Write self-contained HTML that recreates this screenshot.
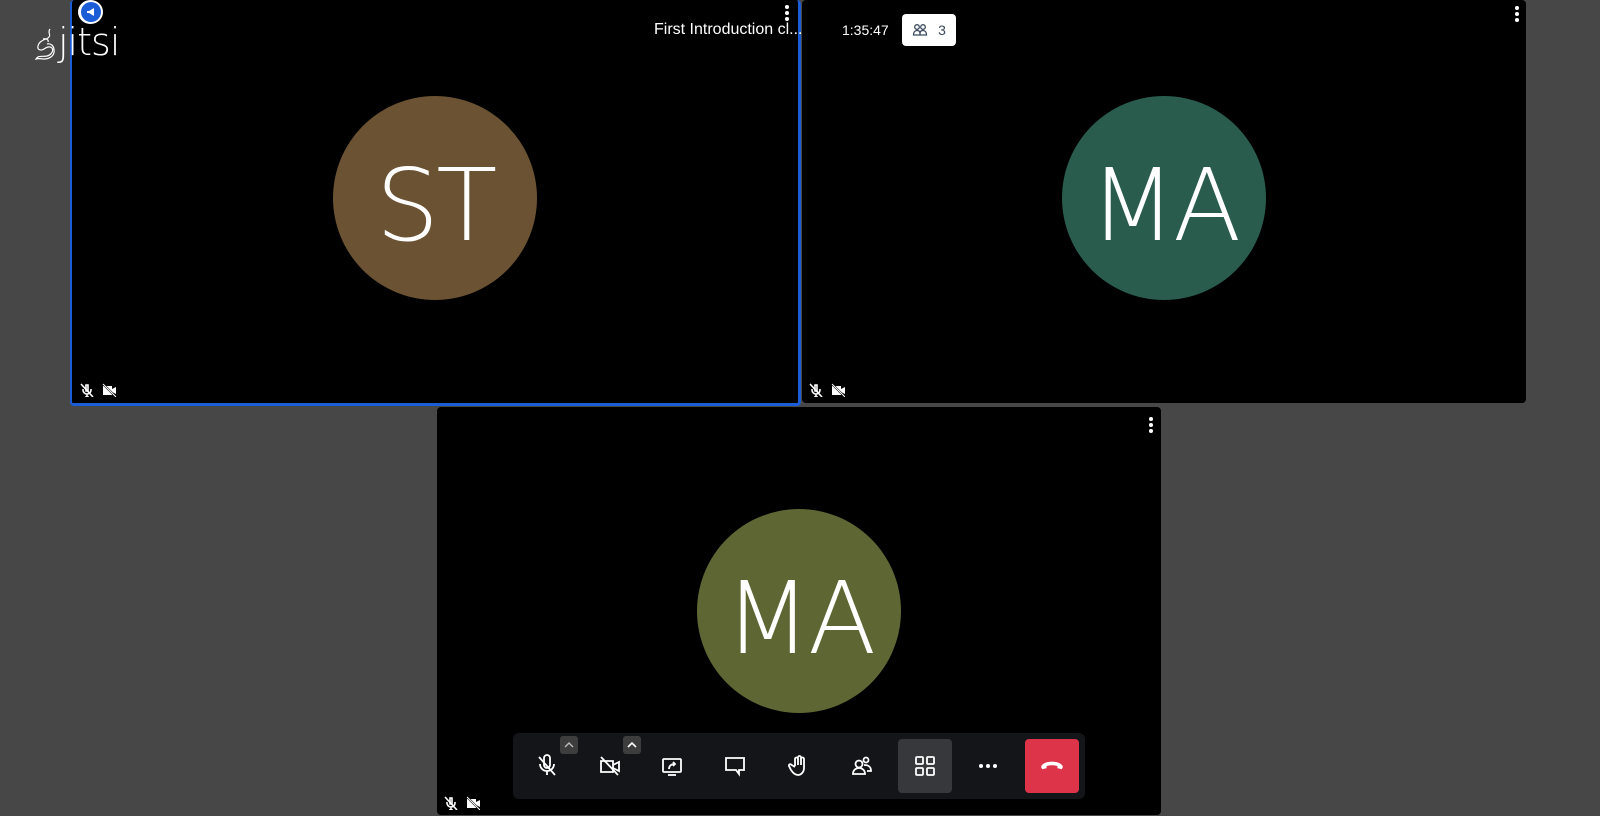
<!DOCTYPE html>
<html><head><meta charset="utf-8"><style>
*{margin:0;padding:0;box-sizing:border-box}
body{width:1600px;height:816px;background:#474747;position:relative;overflow:hidden;font-family:"Liberation Sans",sans-serif;color:#fff}
.tile{position:absolute;background:#000;border-radius:4px}
.av{position:absolute;border-radius:50%;display:flex;align-items:center;justify-content:center;font-size:100px;color:#fff;letter-spacing:-3px;font-family:"DejaVu Sans","Liberation Sans",sans-serif;font-weight:200;padding-top:14px}
.dots{position:absolute;width:4px}
.dots i{display:block;width:4px;height:4px;border-radius:50%;background:#fff;margin-bottom:2px}
.ind{position:absolute;display:flex;gap:8px}
.btn{position:absolute;top:739px;width:54px;height:54px;display:flex;align-items:center;justify-content:center;border-radius:4px}
.car{position:absolute;top:736px;width:18px;height:18px;background:#3d3d3d;border-radius:3px;display:flex;align-items:center;justify-content:center}
</style></head><body>
<div class="tile" style="left:70px;top:0;width:731px;height:406px;border:3px solid #1a5dd6;border-top:none;border-left-width:2px"></div>
<div class="tile" style="left:802px;top:0;width:724px;height:403px"></div>
<div class="tile" style="left:437px;top:407px;width:724px;height:408px"></div>

<div class="av" style="left:333px;top:96px;width:204px;height:204px;background:#6a5232">ST</div>
<div class="av" style="left:1062px;top:96px;width:204px;height:204px;background:#295c4d">MA</div>
<div class="av" style="left:697px;top:509px;width:204px;height:204px;background:#5e6734">MA</div>

<div class="dots" style="left:785px;top:5px"><i></i><i></i><i></i></div>
<div class="dots" style="left:1515px;top:6px"><i></i><i></i><i></i></div>
<div class="dots" style="left:1149px;top:417px"><i></i><i></i><i></i></div>

<svg width="0" height="0" style="position:absolute"><defs>
<g id="mic"><path d="M6 2h2v6H6z M3 6v1a4 4 0 0 0 8 0V6 M7 11v3 M5 14h4" stroke="#fff" stroke-width="1.6" fill="none"/><path d="M1 1l12 13" stroke="#fff" stroke-width="1.6"/></g>
<g id="cam"><path d="M1 3h9v9H1z" fill="#fff"/><path d="M10 6l4-2v7l-4-2z" fill="#fff"/><path d="M1 1l13 13" stroke="#000" stroke-width="2"/><path d="M1 1l13 13" stroke="#fff" stroke-width="1"/></g>
</defs></svg>
<div class="ind" style="left:80px;top:383px"><svg width="14" height="14"><use href="#mic"/></svg><svg width="14" height="14"><use href="#cam"/></svg></div>
<div class="ind" style="left:809px;top:383px"><svg width="14" height="14"><use href="#mic"/></svg><svg width="14" height="14"><use href="#cam"/></svg></div>
<div class="ind" style="left:444px;top:796px"><svg width="14" height="14"><use href="#mic"/></svg><svg width="14" height="14"><use href="#cam"/></svg></div>

<div style="position:absolute;left:78px;top:0;width:25px;height:24px;border-radius:50%;background:#fff;display:flex;align-items:center;justify-content:center"><div style="width:20px;height:20px;border-radius:50%;background:#1a5dd6;display:flex;align-items:center;justify-content:center"><svg width="10" height="10" viewBox="0 0 10 10"><path d="M1 4h2l5-3v8L3 6H1z" fill="#fff"/></svg></div></div>

<svg style="position:absolute;left:30px;top:27px" width="30" height="36" viewBox="0 0 30 36" fill="none" stroke="#fff" stroke-width="1.2"><path d="M20 2c-3 4 2 6-2 9-4 2-9 3-10 8-1 4 3 5 6 3 3-2 6-3 8-1 2 3-1 7-5 8-4 1-9-1-11 3 3-1 5 0 8 0 5 0 11-3 10-9 0-4-3-7-7-6M13 12c3-1 6 1 5 3"/></svg>
<div style="position:absolute;left:58px;top:20px;font-size:38px;font-family:'DejaVu Sans',sans-serif;font-weight:200;letter-spacing:-1px">jitsi</div>

<div style="position:absolute;left:654px;top:21px;font-size:16px">First Introduction cl...</div>
<div style="position:absolute;left:842px;top:22px;font-size:14px">1:35:47</div>
<div style="position:absolute;left:902px;top:14px;width:54px;height:32px;background:#fff;border-radius:4px;display:flex;align-items:center;justify-content:center;gap:10px;color:#3b4a5c;font-size:14px"><svg width="16" height="16" viewBox="0 0 16 16" fill="none" stroke="#3b4a5c" stroke-width="1.3"><circle cx="5" cy="5" r="2.3"/><circle cx="11" cy="5" r="2.3"/><path d="M1.5 13c0-3 1.5-4.5 3.5-4.5s3 1 3 3v1.5zM8 13v-1.5c0-2 1-3 3-3s3.5 1.5 3.5 4.5z"/></svg>3</div>

<div style="position:absolute;left:513px;top:733px;width:572px;height:66px;background:#131519;border-radius:6px"></div>
<div class="btn" style="left:520px"><svg width="24" height="24" viewBox="0 0 24 24" fill="none" stroke="#fff" stroke-width="1.8"><path d="M9 4a3 3 0 0 1 6 0v7a3 3 0 0 1-6 0z M5 10a7 7 0 0 0 14 0 M12 17v4"/><path d="M4 3l16 18"/></svg></div>
<div class="car" style="left:560px"><svg width="10" height="6"><path d="M1 5l4-4 4 4" stroke="#bbb" stroke-width="1.4" fill="none"/></svg></div>
<div class="btn" style="left:583px"><svg width="24" height="24" viewBox="0 0 24 24" fill="none" stroke="#fff" stroke-width="1.8"><path d="M3 7h12v11H3z M15 11l6-3v9l-6-3"/><path d="M3 3l17 18"/></svg></div>
<div class="car" style="left:623px"><svg width="10" height="6"><path d="M1 5l4-4 4 4" stroke="#fff" stroke-width="1.6" fill="none"/></svg></div>
<div class="btn" style="left:645px"><svg width="24" height="24" viewBox="0 0 24 24" fill="none" stroke="#fff" stroke-width="1.8"><rect x="3" y="5" width="18" height="13" rx="1"/><path d="M8 21h8"/><path d="M9 15c0-3 2-5 6-5M13 8l2 2-2 2" /></svg></div>
<div class="btn" style="left:708px"><svg width="24" height="24" viewBox="0 0 24 24" fill="none" stroke="#fff" stroke-width="1.8"><path d="M3 4h18v12h-5v4l-3-4H3z"/></svg></div>
<div class="btn" style="left:772px"><svg width="24" height="24" viewBox="0 0 24 24" fill="none" stroke="#fff" stroke-width="1.8"><path d="M8 12V5a1.5 1.5 0 0 1 3 0v6V3.5a1.5 1.5 0 0 1 3 0V11V5a1.5 1.5 0 0 1 3 0v9c0 4-3 7-6 7s-5-2-7-5l-2-4a1.3 1.3 0 0 1 2-1.5L8 13"/></svg></div>
<div class="btn" style="left:835px"><svg width="24" height="24" viewBox="0 0 24 24" fill="none" stroke="#fff" stroke-width="1.8"><circle cx="9" cy="10" r="3.5"/><circle cx="16" cy="6" r="2.5"/><path d="M3 20c0-4 3-6 6-6s6 2 6 6z M14 11c4 0 7 1 7 6h-4"/></svg></div>
<div class="btn" style="left:898px;background:#36383c"><svg width="24" height="24" viewBox="0 0 24 24" fill="none" stroke="#fff" stroke-width="1.8"><rect x="3" y="3" width="7" height="7" rx="1"/><rect x="14" y="3" width="7" height="7" rx="1"/><rect x="3" y="14" width="7" height="7" rx="1"/><rect x="14" y="14" width="7" height="7" rx="1"/></svg></div>
<div class="btn" style="left:961px"><svg width="24" height="24" viewBox="0 0 24 24" fill="#fff"><circle cx="5" cy="12" r="2"/><circle cx="12" cy="12" r="2"/><circle cx="19" cy="12" r="2"/></svg></div>
<div class="btn" style="left:1025px;background:#dd344a"><svg width="26" height="26" viewBox="0 0 24 24" fill="#fff"><path d="M2 13c0-3 5-5 10-5s10 2 10 5l-1 2-4-1v-2c-3-1-7-1-10 0v2l-4 1z"/></svg></div>
</body></html>
